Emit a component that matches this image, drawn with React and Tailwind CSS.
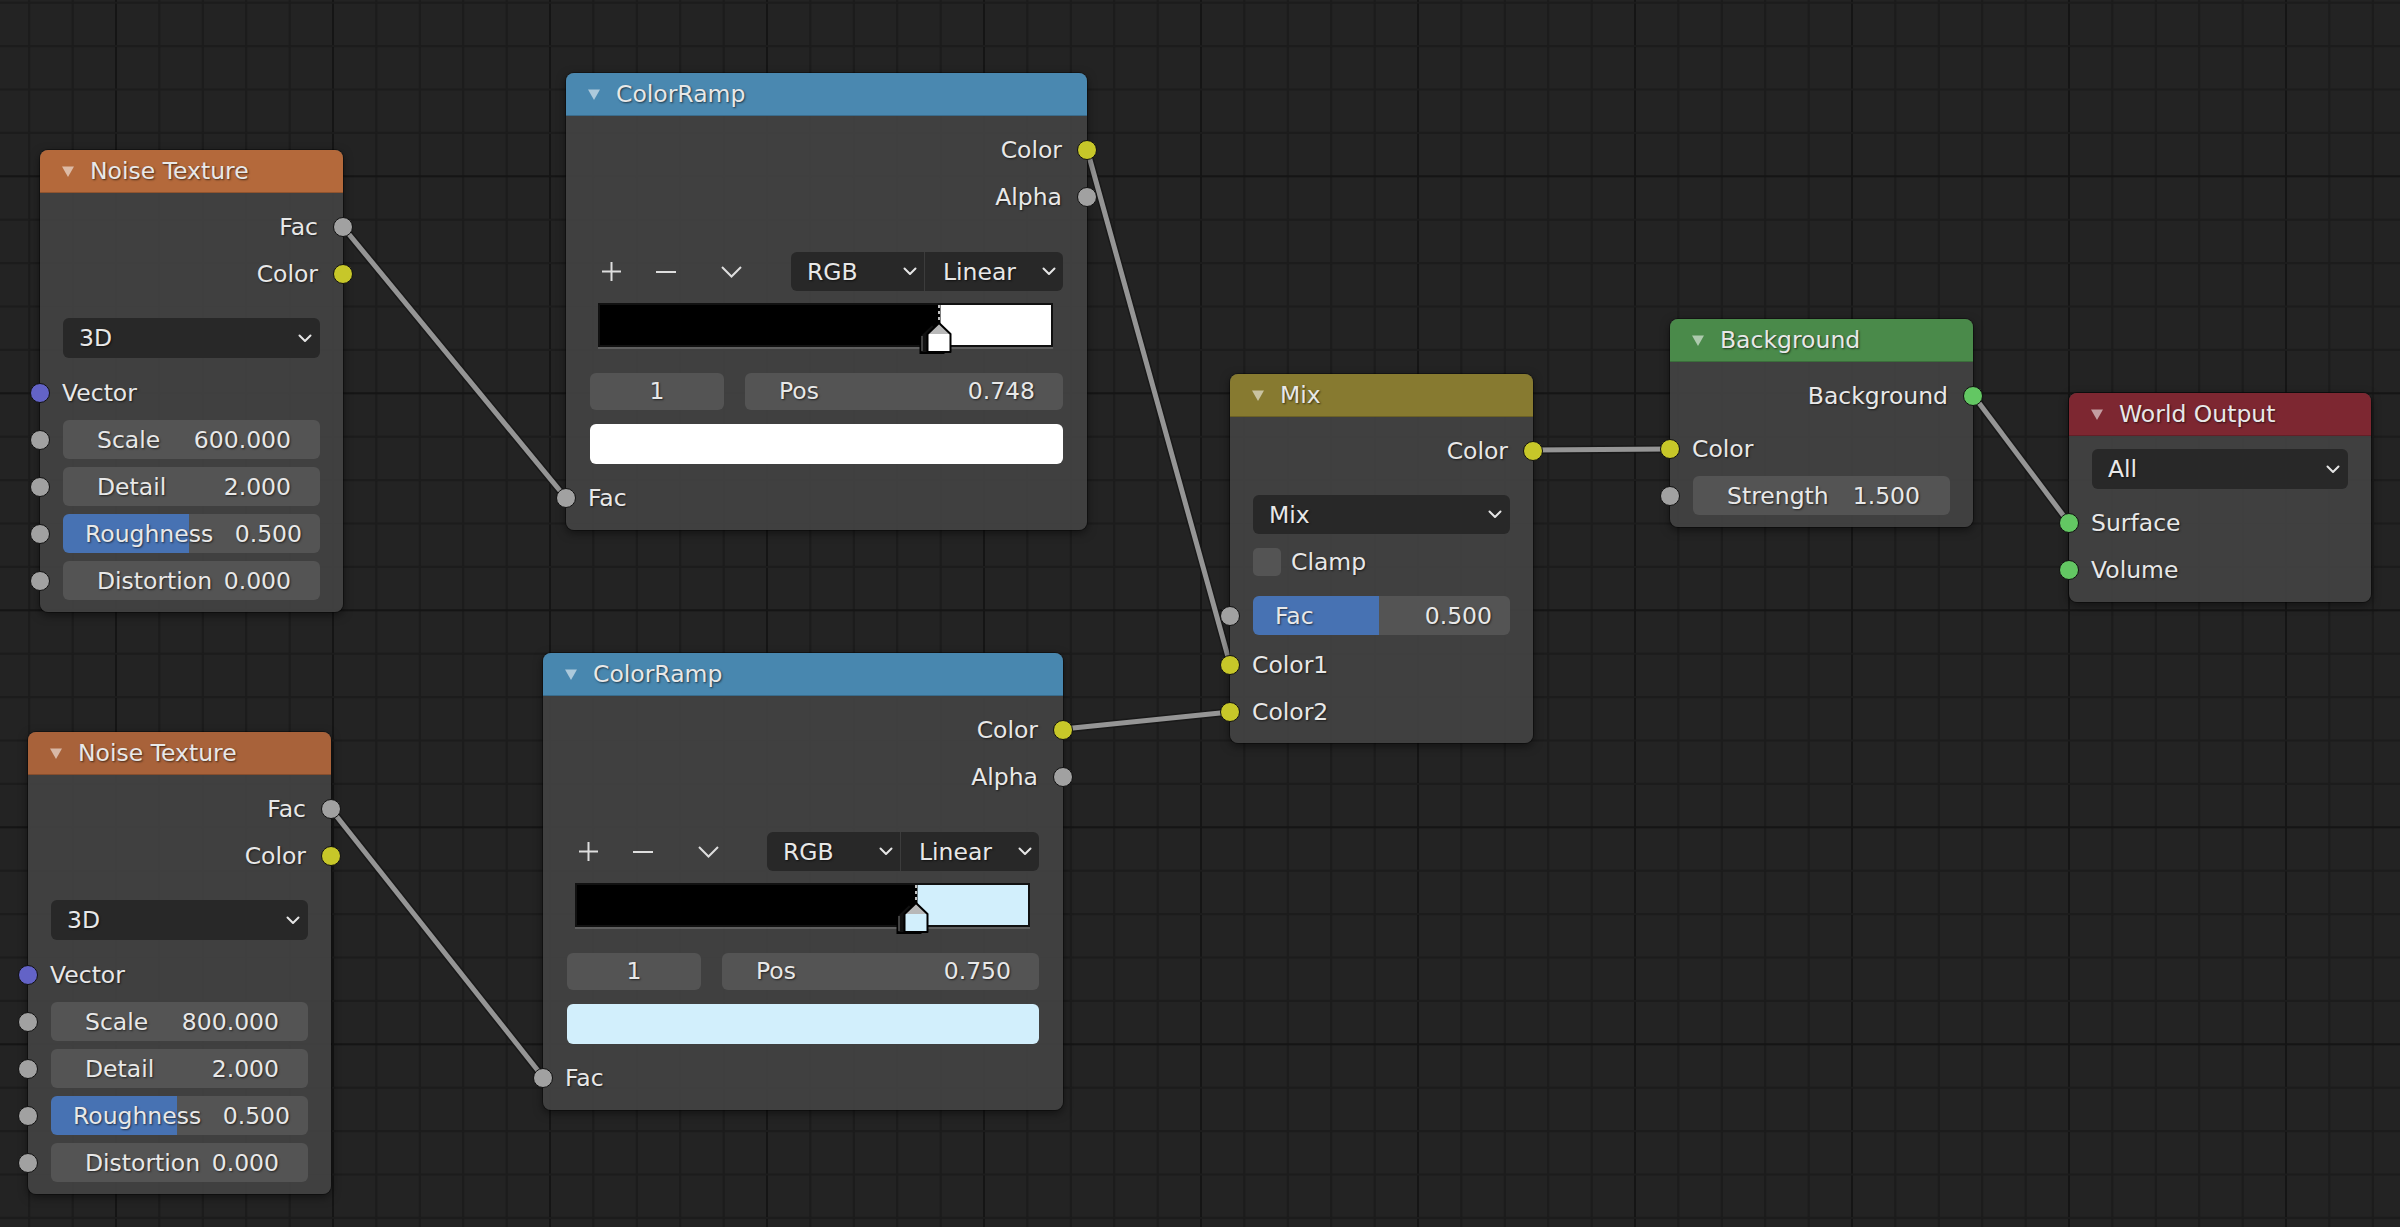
import clsx from "clsx";

const W = 2400;
const H = 1227;

// node editor grid: a line every 43.4px, every fifth one darker
const STEP = 43.4;
const vLines = [];
for (let k = 0; 29.2 + k * STEP < W; k++) vLines.push({ at: 29.2 + k * STEP, major: k % 5 === 2 });
const hLines = [];
for (let k = 0; 2.7 + k * STEP < H; k++) hLines.push({ at: 2.7 + k * STEP, major: k % 5 === 4 });

// socket to socket links [x1, y1, x2, y2]
const links = [
  [343, 227, 566, 498],
  [1087, 149, 1230, 664],
  [1063, 729, 1230, 712],
  [330, 808, 543, 1077],
  [1533, 450, 1670, 449],
  [1973, 395, 2069, 523],
];

const sockets = {
  gray: "bg-[#a1a1a1]",
  yellow: "bg-[#c7c729]",
  violet: "bg-[#6363c7]",
  green: "bg-[#63c763]",
};

function Backdrop() {
  return (
    <svg className="absolute inset-0" width={W} height={H}>
      {vLines.map((l, i) => (
        <rect key={"v" + i} x={l.at - 1} y={0} width={2} height={H} fill={l.major ? "#151515" : "#1c1c1c"} />
      ))}
      {hLines.map((l, i) => (
        <rect key={"h" + i} x={0} y={l.at - 1} width={W} height={2} fill={l.major ? "#151515" : "#1c1c1c"} />
      ))}
      {links.map(([x1, y1, x2, y2], i) => (
        <g key={i}>
          <line x1={x1} y1={y1} x2={x2} y2={y2} stroke="#161616" strokeOpacity="0.8" strokeWidth="8" strokeLinecap="round" />
          <line x1={x1} y1={y1} x2={x2} y2={y2} stroke="#959595" strokeWidth="5" strokeLinecap="round" />
        </g>
      ))}
    </svg>
  );
}

function Socket({ kind, side }) {
  return (
    <span
      className={clsx(
        "absolute top-1/2 h-[20px] w-[20px] -translate-y-1/2 rounded-full border-[1.5px] border-[#111]",
        sockets[kind],
        side === "in" ? "-left-[10px]" : "-right-[10px]"
      )}
    />
  );
}

const Chevron = () => (
  <svg width="14" height="9" viewBox="0 0 14 9">
    <path d="M1.5 1.5 L7 7 L12.5 1.5" fill="none" stroke="#e6e6e6" strokeWidth="2" strokeLinecap="round" strokeLinejoin="round" />
  </svg>
);

function Node({ pos, head, title, pb, children }) {
  return (
    <div
      className={clsx(
        "absolute rounded-[8px] bg-[#444444]/90 shadow-[0_0_0_1px_rgba(0,0,0,0.35),0_3px_10px_rgba(0,0,0,0.5)]",
        pos
      )}
    >
      <div className={clsx("flex h-[43px] items-center rounded-t-[8px] border-b border-black/20 pl-[22px]", head)}>
        <svg width="12" height="11" viewBox="0 0 12 11">
          <path d="M0 0.5 H12 L6 11 Z" fill="#ffffff" fillOpacity="0.55" />
        </svg>
        <span className="ml-[16px] pt-[2px]">{title}</span>
      </div>
      <div className={clsx("pt-[10px]", pb)}>{children}</div>
    </div>
  );
}

const OutRow = ({ label, kind }) => (
  <div className="relative flex h-[47px] items-center justify-end pr-[25px]">
    <span className="pt-[2px]">{label}</span>
    <Socket kind={kind} side="out" />
  </div>
);

const InRow = ({ label, kind, className }) => (
  <div className={clsx("relative flex h-[47px] items-center pl-[22px]", className)}>
    <Socket kind={kind} side="in" />
    <span className="pt-[2px]">{label}</span>
  </div>
);

const Select = ({ label, className }) => (
  <div className={clsx("mx-[23px] flex items-center justify-between rounded-[6px] bg-[#282828] pl-[16px] pr-[8px]", className)}>
    <span className="pt-[2px]">{label}</span>
    <Chevron />
  </div>
);

function Slider({ label, value, fill, pad, className }) {
  return (
    <div className={clsx("relative", className)}>
      <Socket kind="gray" side="in" />
      <div
        className={clsx(
          "mx-[23px] flex h-[39px] items-center justify-between rounded-[6px] pt-[2px]",
          fill ? "bg-[linear-gradient(90deg,#4772b3_49%,#545454_49%)]" : "bg-[#545454]",
          pad
        )}
      >
        <span>{label}</span>
        <span>{value}</span>
      </div>
    </div>
  );
}

function StopMarker({ fill }) {
  return (
    <svg className="absolute left-[317px] top-0" width="40" height="56" viewBox="0 0 40 56">
      <line x1="24" y1="2" x2="24" y2="21" stroke="#000" strokeWidth="3" />
      <line x1="24" y1="2" x2="24" y2="21" stroke="#fff" strokeWidth="1.5" strokeDasharray="3 3" />
      {/* drop copy behind the handle */}
      <path d="M5.5 32 L17 21 L28.5 32 V50 H5.5 Z" fill="#111" stroke="#000" strokeWidth="2" />
      <line x1="7" y1="33" x2="7" y2="48" stroke="#777" strokeWidth="1" />
      <path d="M12.5 31 H35.5 V49 H12.5 Z" fill={fill} />
      <path d="M12.5 31 L24 20 L35.5 31 Z" fill="#b8b8b8" />
      <path d="M12.5 31 L24 20 L35.5 31 V49 H12.5 Z" fill="none" stroke="#000" strokeWidth="2" strokeLinejoin="round" />
    </svg>
  );
}

function ColorRampBody({ tone, hex, pos }) {
  return (
    <>
      <OutRow label="Color" kind="yellow" />
      <OutRow label="Alpha" kind="gray" />
      <div className="mx-[24px] mt-[32px] flex h-[39px] items-center">
        <div className="flex w-[42px] justify-center">
          <svg width="21" height="21" viewBox="0 0 21 21">
            <path d="M10.5 1 V20 M1 10.5 H20" stroke="#dedede" strokeWidth="2" />
          </svg>
        </div>
        <div className="flex w-[68px] justify-center">
          <svg width="20" height="4" viewBox="0 0 20 4">
            <path d="M0 2 H20" stroke="#dedede" strokeWidth="2" />
          </svg>
        </div>
        <div className="flex w-[62px] justify-center">
          <svg width="21" height="12" viewBox="0 0 21 12">
            <path d="M1 1 L10.5 10.5 L20 1" fill="none" stroke="#dedede" strokeWidth="2" />
          </svg>
        </div>
        <div className="ml-auto flex h-full w-[272px] rounded-[6px] bg-[#282828]">
          <div className="flex w-[134px] items-center justify-between border-r border-[#3c3c3c] pl-[16px] pr-[7px]">
            <span className="pt-[2px]">RGB</span>
            <Chevron />
          </div>
          <div className="flex flex-1 items-center justify-between pl-[18px] pr-[7px]">
            <span className="pt-[2px]">Linear</span>
            <Chevron />
          </div>
        </div>
      </div>
      <div className="relative ml-[32px] mt-[12px] h-[44px] w-[455px]">
        <div className="flex h-full border-2 border-[#111] shadow-[0_2px_0_rgba(255,255,255,0.16)]">
          <div className="w-[339px] bg-black" />
          <div className={clsx("flex-1", tone)} />
        </div>
        <StopMarker fill={hex} />
      </div>
      <div className="mx-[24px] mt-[24px] flex h-[39px] gap-[21px] pt-[2px]">
        <div className="flex w-[134px] items-center justify-center rounded-[6px] bg-[#545454]">1</div>
        <div className="flex flex-1 items-center justify-between rounded-[6px] bg-[#545454] pl-[34px] pr-[28px]">
          <span>Pos</span>
          <span>{pos}</span>
        </div>
      </div>
      <div className={clsx("mx-[24px] mt-[14px] h-[40px] rounded-[6px]", tone)} />
      <InRow label="Fac" kind="gray" className="mt-[10px]" />
    </>
  );
}

function NoiseBody({ scale }) {
  return (
    <>
      <OutRow label="Fac" kind="gray" />
      <OutRow label="Color" kind="yellow" />
      <Select label="3D" className="mt-[21px] h-[40px]" />
      <InRow label="Vector" kind="violet" className="mt-[11px]" />
      <Slider label="Scale" value={scale} pad="pl-[34px] pr-[29px]" className="mt-[4px]" />
      <Slider label="Detail" value="2.000" pad="pl-[34px] pr-[29px]" className="mt-[8px]" />
      <Slider label="Roughness" value="0.500" fill pad="pl-[22px] pr-[18px]" className="mt-[8px]" />
      <Slider label="Distortion" value="0.000" pad="pl-[34px] pr-[29px]" className="mt-[8px]" />
    </>
  );
}

export default function App() {
  return (
    <div className="relative h-[1227px] w-[2400px] overflow-hidden bg-[#232323] font-['DejaVu_Sans',sans-serif] text-[23.5px] leading-none text-[#e8e8e8] [text-shadow:1px_1px_2px_rgba(0,0,0,0.6)]">
      <Backdrop />

      <Node pos="left-[40px] top-[150px] w-[303px]" head="bg-[#b4693b]" title="Noise Texture" pb="pb-[12px]">
        <NoiseBody scale="600.000" />
      </Node>

      <Node pos="left-[28px] top-[732px] w-[303px]" head="bg-[#a8623a]" title="Noise Texture" pb="pb-[12px]">
        <NoiseBody scale="800.000" />
      </Node>

      <Node pos="left-[566px] top-[73px] w-[521px]" head="bg-[#4a88b0]" title="ColorRamp" pb="pb-[9px]">
        <ColorRampBody tone="bg-white" hex="#ffffff" pos="0.748" />
      </Node>

      <Node pos="left-[543px] top-[653px] w-[520px]" head="bg-[#4887af]" title="ColorRamp" pb="pb-[9px]">
        <ColorRampBody tone="bg-[#d2effc]" hex="#d2effc" pos="0.750" />
      </Node>

      <Node pos="left-[1230px] top-[374px] w-[303px]" head="bg-[#877a30]" title="Mix" pb="pb-[8px]">
        <OutRow label="Color" kind="yellow" />
        <Select label="Mix" className="mt-[21px] h-[39px]" />
        <div className="mx-[23px] mt-[14px] flex h-[28px] items-center">
          <span className="h-[28px] w-[28px] rounded-[5px] bg-[#545454]" />
          <span className="ml-[10px] pt-[2px]">Clamp</span>
        </div>
        <Slider label="Fac" value="0.500" fill pad="pl-[22px] pr-[18px]" className="mt-[20px]" />
        <InRow label="Color1" kind="yellow" className="mt-[6px]" />
        <InRow label="Color2" kind="yellow" />
      </Node>

      <Node pos="left-[1670px] top-[319px] w-[303px]" head="bg-[#4a8a4a]" title="Background" pb="pb-[12px]">
        <OutRow label="Background" kind="green" />
        <InRow label="Color" kind="yellow" className="mt-[6px]" />
        <Slider label="Strength" value="1.500" pad="pl-[34px] pr-[30px]" className="mt-[4px]" />
      </Node>

      <Node pos="left-[2069px] top-[393px] w-[302px]" head="bg-[#7d2731]" title="World Output" pb="pb-[9px]">
        <Select label="All" className="mt-[3px] h-[40px]" />
        <InRow label="Surface" kind="green" className="mt-[10px]" />
        <InRow label="Volume" kind="green" />
      </Node>
    </div>
  );
}
